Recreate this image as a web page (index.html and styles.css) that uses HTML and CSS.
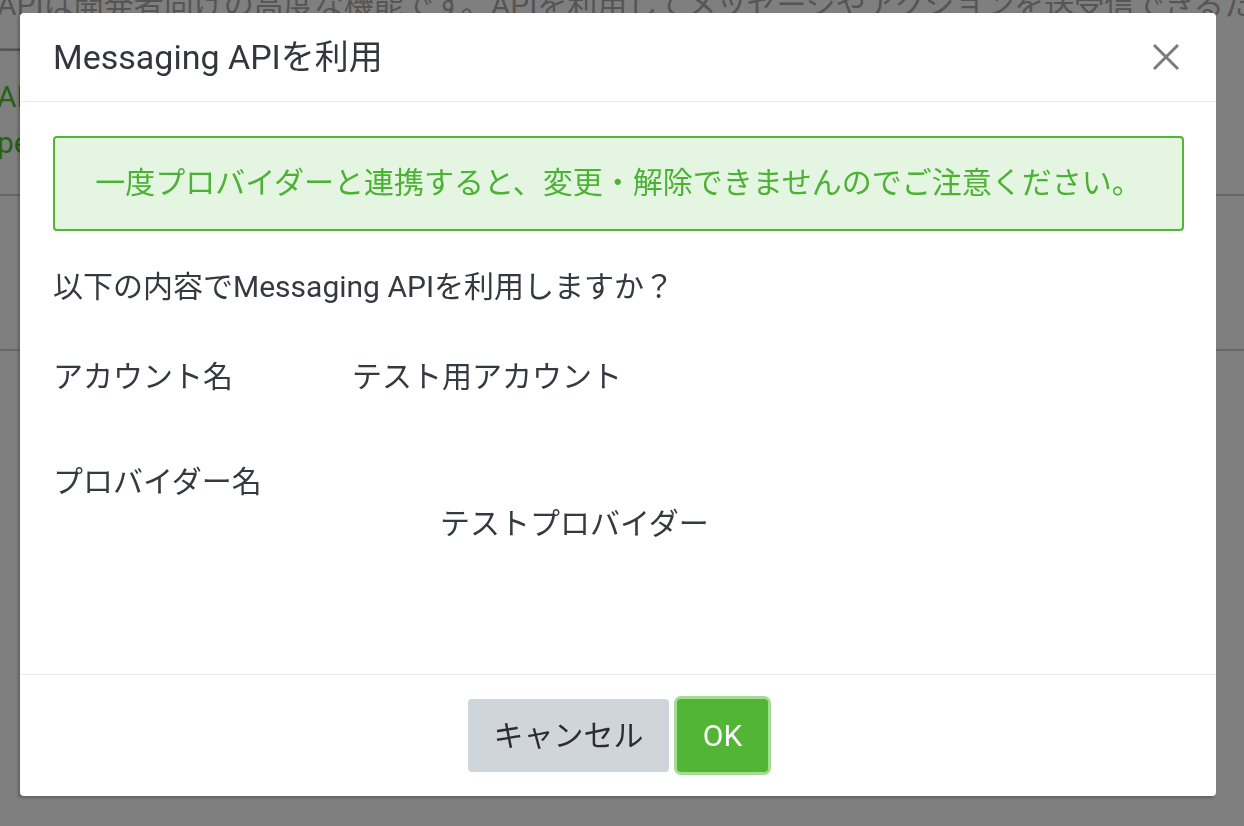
FILE: index.html
```html
<!DOCTYPE html>
<html lang="ja">
<head>
<meta charset="utf-8">
<title>Messaging APIを利用</title>
<link rel="stylesheet" href="styles.css">
</head>
<body>
  <main class="page">
    <p class="page-lead">APIは開発者向けの高度な機能です。APIを利用してメッセージやアクションを送受信できるため、</p>
    <p class="page-lead">ージョンの詳細はドキュメントをご確認ください。</p>
    <p class="page-link">API リファレンス</p>
    <p class="page-link">pe</p>
    <hr class="page-rule rule-a">
    <hr class="page-rule rule-b">
  </main>

  <div class="backdrop">
    <section class="modal" role="dialog" aria-labelledby="modal-title">
      <header class="modal-header">
        <h2 id="modal-title" class="modal-title">Messaging APIを利用</h2>
        <button class="modal-close" type="button" aria-label="閉じる">
          <svg width="28" height="28" viewBox="0 0 28 28" aria-hidden="true">
            <path d="M2 2 L26 26 M26 2 L2 26" stroke="currentColor" stroke-width="3" fill="none"/>
          </svg>
        </button>
      </header>

      <div class="modal-body">
        <div class="notice">一度プロバイダーと連携すると、変更・解除できませんのでご注意ください。</div>
        <p class="question">以下の内容でMessaging APIを利用しますか？</p>
        <dl class="details">
          <div class="detail-row">
            <dt class="detail-label">アカウント名</dt>
            <dd class="detail-value">テスト用アカウント</dd>
          </div>
          <div class="detail-row detail-row-stacked">
            <dt class="detail-label">プロバイダー名</dt>
            <dd class="detail-value detail-value-indented">テストプロバイダー</dd>
          </div>
        </dl>
      </div>

      <footer class="modal-footer">
        <button class="btn btn-cancel" type="button">キャンセル</button>
        <button class="btn btn-ok" type="button">OK</button>
      </footer>
    </section>
  </div>
</body>
</html>
```

FILE: styles.css
```css
* {
  box-sizing: border-box;
}

html,
body {
  margin: 0;
  height: 100%;
}

body {
  font-family: Roboto, "Noto Sans CJK JP", sans-serif;
  background: #ffffff;
  overflow: hidden;
}

/* page behind the dialog */
.page {
  margin-top: -18px;
  margin-left: -3px;
  font-size: 30px;
  line-height: 46px;
  overflow: hidden;
}

.page p {
  margin: 0;
  white-space: nowrap;
}

.page-lead {
  color: #aaaaaa;
}

.page-link {
  color: #4cc22c;
}

.page-rule {
  border: 0;
  border-top: 2px solid #d0d0d0;
  margin: 0;
}

.rule-a {
  margin-top: 28px;
}

.rule-b {
  margin-top: 153px;
}

/* dimmed layer holding the dialog */
.backdrop {
  position: fixed;
  inset: 0;
  background: rgba(0, 0, 0, 0.5);
  padding: 13px 0 0 20px;
}

.modal {
  width: 1196px;
  background: #ffffff;
  border-radius: 4px;
  box-shadow: -2px 2px 3px rgba(0, 0, 0, 0.25);
  color: #343a40;
}

.modal-header {
  display: flex;
  align-items: center;
  justify-content: space-between;
  height: 89px;
  padding: 0 36px 0 33px;
  border-bottom: 1px solid #ececec;
}

.modal-title {
  margin: 0;
  font-size: 34px;
  font-weight: 400;
  line-height: 42px;
  color: #33373d;
}

.modal-close {
  border: 0;
  background: none;
  padding: 0;
  width: 28px;
  height: 28px;
  color: #7b7b7b;
  cursor: pointer;
}

.modal-body {
  padding: 34px 32px 129px 33px;
}

.notice {
  border: 2px solid #52b535;
  border-radius: 4px;
  background: #e4f5e1;
  color: #4cb234;
  font-size: 30px;
  line-height: 42px;
  padding: 24px 20px 25px;
  text-align: center;
}

.question {
  margin: 35px 0 0;
  font-size: 30px;
  line-height: 42px;
  color: #343a40;
}

.details {
  margin: 48px 0 0;
  font-size: 30px;
  line-height: 42px;
  color: #343a40;
}

.detail-row {
  display: flex;
}

.detail-row + .detail-row {
  margin-top: 63px;
}

.detail-row-stacked {
  flex-direction: column;
}

.detail-label {
  width: 299px;
  flex: none;
}

.detail-value {
  margin: 0;
}

.detail-value-indented {
  margin-left: 387px;
}

.modal-footer {
  display: flex;
  justify-content: center;
  gap: 8px;
  padding: 24px 0 24px;
  border-top: 1px solid #ececec;
}

.btn {
  height: 73px;
  border: 0;
  border-radius: 4px;
  font-family: Roboto, "Noto Sans CJK JP", sans-serif;
  font-size: 30px;
  line-height: 42px;
  cursor: pointer;
}

.btn-cancel {
  width: 201px;
  background: #d0d4db;
  color: #2a2e33;
}

.btn-ok {
  width: 91px;
  background: #52b535;
  color: #ffffff;
  box-shadow: 0 0 0 3px #a3dc93;
}
```
